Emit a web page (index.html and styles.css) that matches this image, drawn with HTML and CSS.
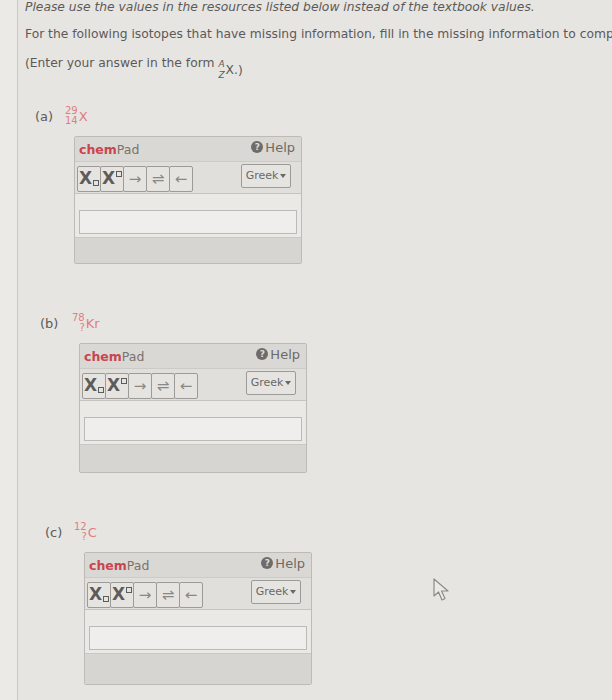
FILE: index.html
```html
<!DOCTYPE html>
<html>
<head>
<meta charset="utf-8">
<link rel="stylesheet" href="styles.css">
</head>
<body>
<div class="frame">
  <p class="note">Please use the values in the resources listed below instead of the textbook values.</p>
  <p class="intro">For the following isotopes that have missing information, fill in the missing information to complete the notation.</p>
  <p class="intro2">(Enter your answer in the form <span class="form"><span class="stack"><span class="up">A</span><span class="dn">Z</span></span>X.)</span></p>

  <section class="q q-a">
    <div class="label"><span class="letter">(a)</span><span class="iso"><span class="stack r"><span class="up">29</span><span class="dn">14</span></span><span class="sym">X</span></span></div>
    <div class="pad">
      <div class="pad-head"><span class="brand"><b>chem</b>Pad</span><span class="help"><span class="qicon">?</span>Help</span></div>
      <div class="pad-tools">
        <div class="btns">
          <span class="btn"><span class="bx">X</span><span class="sq sub"></span></span>
          <span class="btn"><span class="bx">X</span><span class="sq sup"></span></span>
          <span class="btn arrow">&rarr;</span>
          <span class="btn arrow">&#8652;</span>
          <span class="btn arrow">&larr;</span>
        </div>
        <span class="greek">Greek<span class="caret"></span></span>
      </div>
      <div class="pad-body"><div class="field"></div></div>
      <div class="pad-foot"></div>
    </div>
  </section>

  <section class="q q-b">
    <div class="label"><span class="letter">(b)</span><span class="iso"><span class="stack r"><span class="up">78</span><span class="dn">?</span></span><span class="sym">Kr</span></span></div>
    <div class="pad">
      <div class="pad-head"><span class="brand"><b>chem</b>Pad</span><span class="help"><span class="qicon">?</span>Help</span></div>
      <div class="pad-tools">
        <div class="btns">
          <span class="btn"><span class="bx">X</span><span class="sq sub"></span></span>
          <span class="btn"><span class="bx">X</span><span class="sq sup"></span></span>
          <span class="btn arrow">&rarr;</span>
          <span class="btn arrow">&#8652;</span>
          <span class="btn arrow">&larr;</span>
        </div>
        <span class="greek">Greek<span class="caret"></span></span>
      </div>
      <div class="pad-body"><div class="field"></div></div>
      <div class="pad-foot"></div>
    </div>
  </section>

  <section class="q q-c">
    <div class="label"><span class="letter">(c)</span><span class="iso"><span class="stack r"><span class="up">12</span><span class="dn">?</span></span><span class="sym">C</span></span></div>
    <div class="pad">
      <div class="pad-head"><span class="brand"><b>chem</b>Pad</span><span class="help"><span class="qicon">?</span>Help</span></div>
      <div class="pad-tools">
        <div class="btns">
          <span class="btn"><span class="bx">X</span><span class="sq sub"></span></span>
          <span class="btn"><span class="bx">X</span><span class="sq sup"></span></span>
          <span class="btn arrow">&rarr;</span>
          <span class="btn arrow">&#8652;</span>
          <span class="btn arrow">&larr;</span>
        </div>
        <span class="greek">Greek<span class="caret"></span></span>
      </div>
      <div class="pad-body"><div class="field"></div></div>
      <div class="pad-foot"></div>
    </div>
  </section>
</div>
<svg class="cursor" width="24" height="26" viewBox="0 0 24 26"><path d="M2 2 L2 19 L6.5 15 L10 23 L13 21.5 L9.5 14 L16 14 Z" fill="#eceae7" stroke="#8d8b88" stroke-width="1.2" stroke-linejoin="round"/></svg>
</body>
</html>
```
FILE: styles.css
```css
html, body {
  margin: 0;
  padding: 0;
  background: #e7e5e2;
  overflow: hidden;
}
body {
  width: 612px;
  height: 700px;
  position: relative;
  font-family: "DejaVu Sans", Verdana, sans-serif;
  color: #5c5a58;
  background: linear-gradient(to right, #eceae7 0, #eceae7 17px, #c9c7c4 17px, #c9c7c4 18px, #e7e5e2 18px);
}
.frame {
  padding: 0 0 0 25px;
  white-space: nowrap;
}
p { margin: 0; }
.note {
  font-style: italic;
  font-size: 12.3px;
  line-height: 14px;
}
.intro {
  font-size: 12.3px;
  line-height: 16px;
  margin-top: 12px;
}
.intro2 {
  font-size: 12.3px;
  line-height: 22px;
  margin-top: 10px;
}
.form {
  display: inline-flex;
  align-items: center;
}
.stack {
  display: inline-flex;
  flex-direction: column;
  margin-right: 1px;
  vertical-align: middle;
}
.stack.r { align-items: flex-end; }
.intro2 .stack { font-style: italic; font-size: 9px; line-height: 11px; }
.q {
  display: flex;
  flex-direction: column;
}
.q-a { margin-top: 22px; margin-left: 10px; }
.q-b { margin-top: 46px; margin-left: 15px; }
.q-c { margin-top: 46px; margin-left: 20px; }
.label {
  display: flex;
  align-items: center;
  font-size: 13px;
  height: 26px;
}
.letter { width: 30px; }
.q-b .letter { width: 32px; }
.q-c .letter { width: 29px; }
.iso {
  display: inline-flex;
  align-items: center;
  color: #e07d80;
}
.iso .stack { font-size: 10px; line-height: 10px; }
.iso .sym { font-size: 13px; }
.pad {
  margin-left: 39px;
  margin-top: 7px;
  width: 226px;
  border: 1px solid #bdbbb8;
  border-radius: 2px;
  display: flex;
  flex-direction: column;
  background: #e9e7e4;
}
.pad-head {
  height: 24px;
  background: #dad8d5;
  display: flex;
  align-items: center;
  justify-content: space-between;
  padding: 0 6px 0 4px;
  border-bottom: 1px solid #cdcbc8;
}
.brand {
  font-size: 12.5px;
  color: #77736f;
}
.brand b { color: #c8454f; font-weight: bold; }
.help {
  display: flex;
  align-items: center;
  font-size: 13px;
  color: #6d6a67;
  margin-top: -4px;
}
.qicon {
  width: 12px;
  height: 12px;
  border-radius: 50%;
  background: #6e6c6a;
  color: #dedcd9;
  font-size: 9px;
  font-weight: bold;
  line-height: 12px;
  text-align: center;
  margin-right: 2px;
}
.pad-tools {
  height: 31px;
  display: flex;
  align-items: center;
  justify-content: space-between;
  padding: 0 10px 0 2px;
  background: #e1dfdc;
  border-bottom: 1px solid #c6c4c1;
}
.btns { display: flex; }
.btn {
  width: 22px;
  height: 24px;
  border: 1px solid #9d9b98;
  border-radius: 2px;
  background: #e6e4e1;
  display: flex;
  align-items: center;
  justify-content: center;
  position: relative;
  color: #5e5c5a;
  margin-right: -1px;
  margin-top: 2px;
}
.bx { font-size: 17px; font-weight: bold; line-height: 17px; }
.sq {
  width: 4px;
  height: 4px;
  border: 1px solid #5e5c5a;
  display: inline-block;
  margin-left: 1px;
}
.sq.sub { align-self: flex-end; margin-bottom: 5px; }
.sq.sup { align-self: flex-start; margin-top: 4px; }
.arrow { font-size: 15px; color: #8a8885; }
.greek {
  width: 48px;
  height: 22px;
  border: 1px solid #9d9b98;
  border-radius: 2px;
  background: #e6e4e1;
  display: flex;
  align-items: center;
  justify-content: center;
  font-size: 11px;
  color: #6a6865;
  margin-top: -4px;
}
.caret {
  width: 0;
  height: 0;
  border-left: 3.5px solid transparent;
  border-right: 3.5px solid transparent;
  border-top: 4px solid #6a6865;
  margin-left: 2px;
}
.pad-body {
  padding: 16px 4px 3px 4px;
  background: #ebe9e6;
}
.field {
  height: 22px;
  border: 1px solid #bcbab7;
  background: #efeeec;
}
.pad-foot {
  height: 25px;
  background: #d7d5d2;
  border-top: 1px solid #cac8c5;
}
.q-b .pad-foot { height: 27px; }
.q-c .pad-foot { height: 30px; }
.cursor {
  position: absolute;
  left: 432px;
  top: 577px;
}
```
